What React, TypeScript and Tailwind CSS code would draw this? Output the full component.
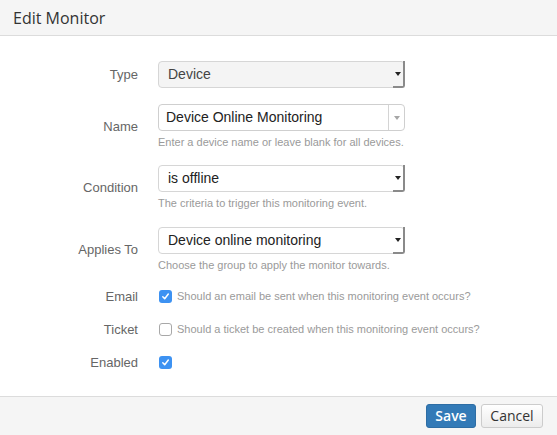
import React from "react";

const labelCls =
  "w-[138px] shrink-0 text-right text-[13px] text-[#666] pr-0";

function NativeSelect({ value, disabled }: { value: string; disabled?: boolean }) {
  return (
    <div
      className={`relative h-[27px] w-[247px] rounded-[4px] border border-[#d6d6d6] flex items-center pl-[9px] text-[14px] text-[#222] ${
        disabled ? "bg-[#f4f4f4] text-[#444]" : "bg-white"
      }`}
    >
      <span>{value}</span>
      <span className="absolute right-[-1px] top-[-1px] bottom-[-1px] w-[12px] rounded-br-[3px] border-r-2 border-b-2 border-[#8a8a8a] flex items-center justify-center">
        <svg width="6" height="4" viewBox="0 0 6 4" className="mr-[1px]">
          <path d="M0 0 L6 0 L3 4 Z" fill="#222" />
        </svg>
      </span>
    </div>
  );
}

function Help({ children }: { children: React.ReactNode }) {
  return <div className="mt-[5px] text-[11px] leading-[13px] text-[#9a9a9a]">{children}</div>;
}

function Check({ checked }: { checked: boolean }) {
  return checked ? (
    <span className="w-[13px] h-[13px] rounded-[3px] bg-[#3d92f2] flex items-center justify-center shrink-0">
      <svg width="9" height="9" viewBox="0 0 9 9">
        <path d="M1.8 4.8 L3.7 6.7 L7.3 2" stroke="white" strokeWidth="1.5" fill="none" strokeLinecap="round" strokeLinejoin="round" />
      </svg>
    </span>
  ) : (
    <span className="w-[13px] h-[13px] rounded-[3px] bg-white border border-[#a8a8a8] shrink-0" />
  );
}

export default function App() {
  return (
    <div
      className="w-[557px] h-[435px] flex flex-col bg-white overflow-hidden"
      style={{ fontFamily: '"Liberation Sans", Arial, sans-serif' }}
    >
      <div
        className="h-[36px] shrink-0 bg-[#f5f5f5] border-b border-[#dcdcdc] flex items-center pl-[13px] text-[16px] text-[#333]"
        style={{ fontFamily: '"Open Sans", sans-serif' }}
      >
        Edit Monitor
      </div>

      <div className="flex-1 flex flex-col pt-[25px]">
        <div className="flex items-center gap-[20px]">
          <div className={labelCls}>Type</div>
          <NativeSelect value="Device" disabled />
        </div>

        <div className="flex items-center gap-[20px] mt-[16px]">
          <div className={labelCls}>Name</div>
          <div className="flex flex-col">
            <div className="relative h-[27px] w-[247px] rounded-[4px] border border-[#cfcfcf] bg-white flex items-center">
              <span className="pl-[7px] text-[14px] text-[#222] flex-1">Device Online Monitoring</span>
              <span className="w-[16px] h-full border-l border-[#d4d4d4] flex items-center justify-center">
                <svg width="6" height="4" viewBox="0 0 6 4">
                  <path d="M0 0 L6 0 L3 4 Z" fill="#a6a6a6" />
                </svg>
              </span>
            </div>
            <Help>Enter a device name or leave blank for all devices.</Help>
          </div>
        </div>

        <div className="flex items-center gap-[20px] mt-[16px]">
          <div className={labelCls}>Condition</div>
          <div className="flex flex-col">
            <NativeSelect value="is offline" />
            <Help>The criteria to trigger this monitoring event.</Help>
          </div>
        </div>

        <div className="flex items-center gap-[20px] mt-[17px]">
          <div className={labelCls}>Applies To</div>
          <div className="flex flex-col">
            <NativeSelect value="Device online monitoring" />
            <Help>Choose the group to apply the monitor towards.</Help>
          </div>
        </div>

        <div className="flex flex-col gap-[16px] mt-[16px]">
          <div className="flex items-center gap-[21px] h-[17px]">
            <div className={labelCls}>Email</div>
            <div className="flex items-center gap-[5px]">
              <Check checked />
              <span className="text-[11px] text-[#9a9a9a]">Should an email be sent when this monitoring event occurs?</span>
            </div>
          </div>
          <div className="flex items-center gap-[21px] h-[17px]">
            <div className={labelCls}>Ticket</div>
            <div className="flex items-center gap-[5px]">
              <Check checked={false} />
              <span className="text-[11px] text-[#9a9a9a]">Should a ticket be created when this monitoring event occurs?</span>
            </div>
          </div>
          <div className="flex items-center gap-[21px] h-[17px]">
            <div className={labelCls}>Enabled</div>
            <Check checked />
          </div>
        </div>
      </div>

      <div
        className="h-[39px] shrink-0 bg-[#f5f5f5] border-t border-[#dcdcdc] flex items-center justify-end gap-[5px] pr-[14px]"
        style={{ fontFamily: '"Open Sans", sans-serif' }}
      >
        <button className="w-[50px] h-[24px] rounded-[3px] bg-[#337ab7] border border-[#2e6da4] text-white text-[14px] font-semibold leading-none">
          Save
        </button>
        <button className="w-[62px] h-[24px] rounded-[3px] bg-gradient-to-b from-white to-[#ececec] border border-[#cccccc] text-[#333] text-[14px] leading-none">
          Cancel
        </button>
      </div>
    </div>
  );
}
